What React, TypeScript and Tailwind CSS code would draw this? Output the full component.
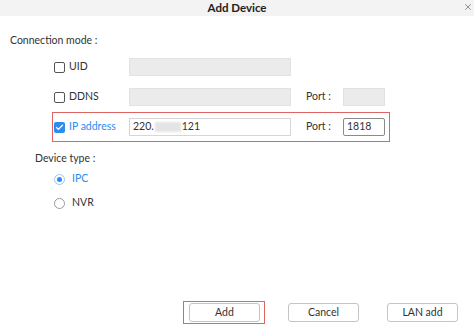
import { Check, X } from 'lucide-react';

const font = { fontFamily: 'Lato, "Noto Sans", Arial, sans-serif' };

function CheckBox({ checked }: { checked?: boolean }) {
  if (checked) {
    return (
      <span className="w-[11px] h-[11px] rounded-[2px] bg-[#2d8cf0] flex items-center justify-center shrink-0">
        <Check className="w-[9px] h-[9px] text-white" strokeWidth={3.5} />
      </span>
    );
  }
  return <span className="w-[11px] h-[11px] rounded-[2px] border border-[#555] bg-white shrink-0" />;
}

function Radio({ checked }: { checked?: boolean }) {
  return (
    <span
      className={
        checked
          ? 'w-[11px] h-[11px] rounded-full border border-[#9cc6f2] bg-white flex items-center justify-center shrink-0'
          : 'w-[11px] h-[11px] rounded-full border border-[#999] bg-white shrink-0'
      }
    >
      {checked && <span className="w-[5px] h-[5px] rounded-full bg-[#2d8cf0]" />}
    </span>
  );
}

function ModeRow({
  label,
  checked,
  port,
  children,
}: {
  label: string;
  checked?: boolean;
  port?: React.ReactNode;
  children: React.ReactNode;
}) {
  return (
    <div
      className={
        checked
          ? 'ml-[52px] w-[338px] h-[30px] flex items-center pl-[1px] border border-[#e06464]'
          : 'ml-[52px] w-[338px] h-[30px] flex items-center pl-[1px] border border-transparent'
      }
    >
      <div className="w-[75px] flex items-center gap-[4px]">
        <CheckBox checked={checked} />
        <span className={checked ? 'text-[#2d8cf0]' : 'text-[#333]'}>{label}</span>
      </div>
      {children}
      {port !== undefined && (
        <>
          <span className="ml-[15px] w-[37px] text-[#333]">Port :</span>
          {port}
        </>
      )}
    </div>
  );
}

export default function App() {
  return (
    <div className="w-[474px] h-[330px] bg-white relative text-[10.5px] text-[#333]" style={font}>
      <div className="h-[16px] bg-[#f3f3f3] flex items-center justify-center">
        <span className="font-bold text-[11.5px] text-[#222]">Add Device</span>
      </div>
      <X className="absolute right-[1px] top-[2px] w-[10px] h-[10px] text-[#555]" strokeWidth={1.5} />

      <div className="pl-[10px] mt-[16px] h-[16px] leading-[16px]">Connection mode :</div>

      <div className="mt-[4px]">
        <ModeRow label="UID">
          <div className="w-[162px] h-[18px] bg-[#ebebeb] border border-[#e2e2e2]" />
        </ModeRow>
        <ModeRow
          label="DDNS"
          port={<div className="w-[42px] h-[18px] bg-[#ebebeb] border border-[#e2e2e2]" />}
        >
          <div className="w-[162px] h-[18px] bg-[#ebebeb] border border-[#e2e2e2]" />
        </ModeRow>
        <ModeRow
          label="IP address"
          checked
          port={
            <div className="w-[42px] h-[18px] bg-white border border-[#8a8a8a] rounded-[2px] flex items-center pl-[3px]">
              1818
            </div>
          }
        >
          <div className="w-[162px] h-[18px] bg-white border border-[#d6d6d6] flex items-center pl-[3px]">
            <span>220.</span>
            <span className="inline-block w-[26px] h-[10px] bg-[#e4e4e4] blur-[1px] mx-[1px]" />
            <span>121</span>
          </div>
        </ModeRow>
      </div>

      <div className="pl-[35px] mt-[8px] h-[16px] leading-[16px]">Device type :</div>

      <div className="mt-[1px] pl-[54px]">
        <div className="h-[24px] flex items-center gap-[7px]">
          <Radio checked />
          <span className="text-[#2d8cf0]">IPC</span>
        </div>
        <div className="h-[24px] flex items-center gap-[7px]">
          <Radio />
          <span>NVR</span>
        </div>
      </div>

      <div className="mt-[86px] flex items-center">
        <div className="ml-[183px] border border-[#e06464] pl-[5px] pr-[4px] py-[1px]">
          <button className="w-[71px] h-[19px] bg-white border border-[#c4c4c4] rounded-[3px] text-[10.5px] text-[#333]">
            Add
          </button>
        </div>
        <button className="ml-[23px] w-[71px] h-[19px] bg-white border border-[#c4c4c4] rounded-[3px] text-[10.5px] text-[#333]">
          Cancel
        </button>
        <button className="ml-[28px] w-[71px] h-[19px] bg-white border border-[#c4c4c4] rounded-[3px] text-[10.5px] text-[#333]">
          LAN add
        </button>
      </div>
    </div>
  );
}
